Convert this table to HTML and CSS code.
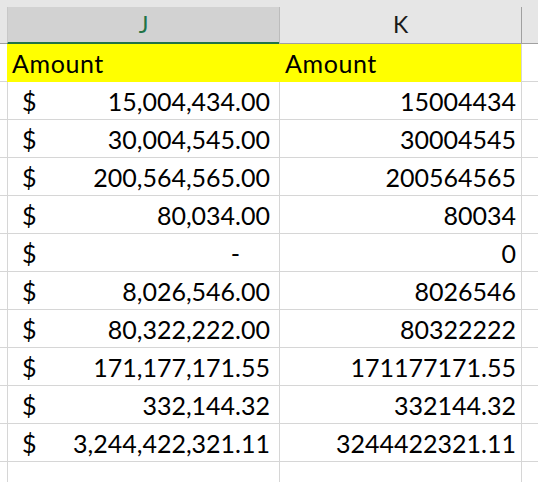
FILE: index.html
```html
<!DOCTYPE html>
<html>
<head>
<meta charset="utf-8">
<link rel="stylesheet" href="styles.css">
</head>
<body>
<div class="sheet">
  <div class="strip"></div>

  <div class="hd stub"></div>
  <div class="hd col sel">J</div>
  <div class="hd col">K</div>
  <div class="hd rest"></div>

  <div class="c stub"></div>
  <div class="c title">Amount</div>
  <div class="c title">Amount</div>
  <div class="c rest"></div>

  <div class="c stub"></div>
  <div class="c acc"><span>$</span><span>15,004,434.00</span></div>
  <div class="c num">15004434</div>
  <div class="c rest"></div>

  <div class="c stub"></div>
  <div class="c acc"><span>$</span><span>30,004,545.00</span></div>
  <div class="c num">30004545</div>
  <div class="c rest"></div>

  <div class="c stub"></div>
  <div class="c acc"><span>$</span><span>200,564,565.00</span></div>
  <div class="c num">200564565</div>
  <div class="c rest"></div>

  <div class="c stub"></div>
  <div class="c acc"><span>$</span><span>80,034.00</span></div>
  <div class="c num">80034</div>
  <div class="c rest"></div>

  <div class="c stub"></div>
  <div class="c acc"><span>$</span><span class="dash">-</span></div>
  <div class="c num">0</div>
  <div class="c rest"></div>

  <div class="c stub"></div>
  <div class="c acc"><span>$</span><span>8,026,546.00</span></div>
  <div class="c num">8026546</div>
  <div class="c rest"></div>

  <div class="c stub"></div>
  <div class="c acc"><span>$</span><span>80,322,222.00</span></div>
  <div class="c num">80322222</div>
  <div class="c rest"></div>

  <div class="c stub"></div>
  <div class="c acc"><span>$</span><span>171,177,171.55</span></div>
  <div class="c num">171177171.55</div>
  <div class="c rest"></div>

  <div class="c stub"></div>
  <div class="c acc"><span>$</span><span>332,144.32</span></div>
  <div class="c num">332144.32</div>
  <div class="c rest"></div>

  <div class="c stub"></div>
  <div class="c acc"><span>$</span><span>3,244,422,321.11</span></div>
  <div class="c num">3244422321.11</div>
  <div class="c rest"></div>

  <div class="c stub last"></div>
  <div class="c last"></div>
  <div class="c last"></div>
  <div class="c rest last"></div>
</div>
</body>
</html>
```

FILE: styles.css
```css
* { box-sizing: border-box; }
html, body { margin: 0; padding: 0; background: #ffffff; }
body { width: 538px; height: 482px; overflow: hidden; font-family: Lato, "Liberation Sans", sans-serif; color: #000; }

.sheet {
  display: grid;
  grid-template-columns: 7px 272px 242px 17px;
  grid-template-rows: 7px 37px 38px repeat(10, 38px) 20px;
}

.strip { grid-column: 1 / -1; background: #e6e6e6; }

.hd {
  background: #e6e6e6;
  border-bottom: 1px solid #a0a0a0;
  font-size: 23px;
  line-height: 35px;
  text-align: center;
  color: #1a1a1a;
}
.hd.col { border-left: 1px solid #bcbcbc; }
.hd.sel { background: #d2d2d2; color: #217346; border-bottom: 2px solid #217346; border-left-color: #c8c8c8; }
.hd.rest { border-left: 1px solid #a0a0a0; }

.c {
  border-left: 1px solid #d6d6d6;
  border-bottom: 1px solid #d6d6d6;
  font-size: 25px;
  line-height: 38px;
  height: 38px;
  white-space: nowrap;
}
.c.stub { border-left: none; }
.c.last { border-bottom: none; height: 20px; }

.title {
  background: #ffff00;
  border-left-color: #ffff00;
  border-bottom-color: #ffff00;
  padding-left: 4px;
  letter-spacing: 0.6px;
}
.title + .title { padding-left: 5px; }

.acc {
  display: flex;
  justify-content: space-between;
  padding-left: 14px;
  padding-right: 9px;
}
.acc .dash { margin-right: 30px; }

.num {
  text-align: right;
  padding-right: 5px;
}
```
